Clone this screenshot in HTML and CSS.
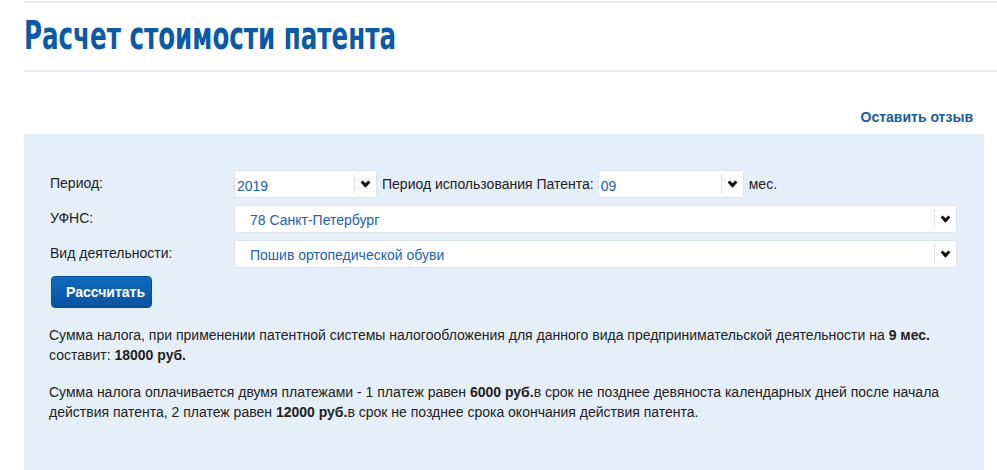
FILE: index.html
```html
<!DOCTYPE html>
<html lang="ru">
<head>
    <meta charset="UTF-8">
    <meta name="viewport" content="width=device-width, initial-scale=1.0">
    <title>Расчет стоимости патента</title>
    <link rel="stylesheet" href="styles.css">
</head>
<body>
    <div class="page">
        <div class="page-header">
            <h1>Расчет стоимости патента</h1>
        </div>
        <div class="feedback">
            <a href="#">Оставить отзыв</a>
        </div>
        <div class="calc">
            <form id="calcForm">
                <div class="form-row">
                    <label class="form-label">Период:</label>
                    <div class="select select-small">
                        <span class="select-value">2019</span>
                        <span class="select-arrow"></span>
                    </div>
                    <span class="inline-label">Период использования Патента:</span>
                    <div class="select select-small select-month">
                        <span class="select-value">09</span>
                        <span class="select-arrow"></span>
                    </div>
                    <span class="inline-label">мес.</span>
                </div>
                <div class="form-row">
                    <label class="form-label">УФНС:</label>
                    <div class="select select-wide">
                        <span class="select-value">78 Санкт-Петербург</span>
                        <span class="select-arrow"></span>
                    </div>
                </div>
                <div class="form-row">
                    <label class="form-label">Вид деятельности:</label>
                    <div class="select select-wide">
                        <span class="select-value">Пошив ортопедической обуви</span>
                        <span class="select-arrow"></span>
                    </div>
                </div>
                <button type="submit" class="btn">Рассчитать</button>
            </form>
            <div class="result">
                <p>Сумма налога, при применении патентной системы налогообложения для данного вида предпринимательской деятельности на <b>9 мес.</b> составит: <b>18000 руб.</b></p>
                <p>Сумма налога оплачивается двумя платежами - 1 платеж равен <b>6000 руб.</b>в срок не позднее девяноста календарных дней после начала действия патента, 2 платеж равен <b>12000 руб.</b>в срок не позднее срока окончания действия патента.</p>
            </div>
        </div>
    </div>
</body>
</html>
```

FILE: styles.css
```css
body {
    font-family: "Liberation Sans", Arial, sans-serif;
    font-size: 14px;
    margin: 0;
    color: #222;
    background: #fff;
}

.page {
    padding-left: 24px;
}

.page-header {
    border-top: 2px solid #e9eef6;
    border-bottom: 2px solid #e9eef6;
    margin-top: 1px;
    height: 67px;
}

.page-header h1 {
    margin: 0;
    padding-top: 10px;
    font-family: "DejaVu Sans Condensed", "Liberation Sans Narrow", sans-serif;
    font-weight: bold;
    font-size: 39px;
    line-height: 46px;
    color: #0c5aa6;
    transform: scaleX(0.7);
    transform-origin: left center;
    white-space: nowrap;
}

.feedback {
    text-align: right;
    padding: 37px 24px 0 0;
    height: 25px;
}

.feedback a {
    color: #1a5aa2;
    font-weight: bold;
    font-size: 14px;
    text-decoration: none;
}

.calc {
    background-color: #e5effa;
    margin-right: 13px;
    padding: 36px 27px 40px 25px;
    min-height: 260px;
}

.form-row {
    display: flex;
    align-items: center;
    margin-bottom: 7px;
}

.form-label {
    width: 184px;
    padding-left: 1px;
    margin-bottom: 2px;
}

.select {
    display: flex;
    align-items: center;
    height: 26px;
    background: #fff;
    border: 1px solid #dde3ea;
    border-radius: 3px;
    position: relative;
}

.select-value {
    flex: 1;
    color: #1b62b0;
    padding-left: 15px;
    padding-top: 1px;
    white-space: nowrap;
    overflow: hidden;
}

.select-small {
    width: 141px;
}

.select-small .select-value {
    padding-left: 2px;
    padding-top: 3px;
}

.select-month {
    width: 144px;
}

.select-wide {
    flex: 1;
}

.select-arrow {
    width: 21px;
    height: 18px;
    border-left: 1px dotted #d8c8cc;
    position: relative;
}

.select-arrow::after {
    content: "";
    position: absolute;
    left: 7px;
    top: 4px;
    width: 4px;
    height: 4px;
    border-right: 3px solid #111;
    border-bottom: 3px solid #111;
    transform: rotate(45deg);
}

.inline-label {
    margin: 0 4px 0 5px;
}

.btn {
    margin: 1px 0 0 2px;
    padding: 0 0 0 14px;
    width: 101px;
    height: 32px;
    border: 1px solid #0a4f97;
    border-radius: 4px;
    background: linear-gradient(#0e6bbd, #0a52a0);
    color: #fff;
    font-family: "Liberation Sans", Arial, sans-serif;
    font-weight: bold;
    font-size: 14px;
    text-align: left;
    cursor: pointer;
}

.result p {
    margin: 17px 0 0 0;
    line-height: 20px;
}

.result p + p {
    margin-top: 17px;
}
```
